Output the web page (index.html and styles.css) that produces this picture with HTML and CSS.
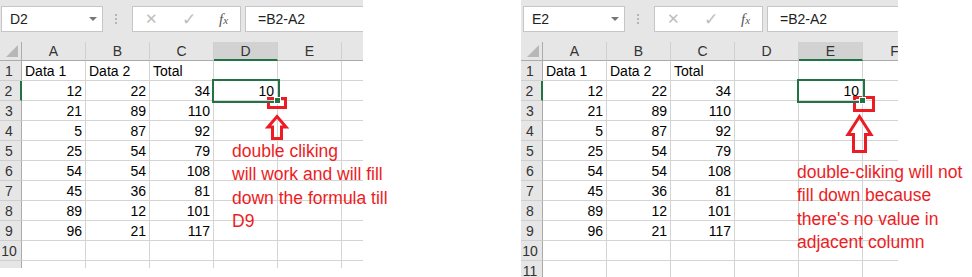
FILE: index.html
```html
<!DOCTYPE html>
<html lang="en">
<head>
    <meta charset="UTF-8">
    <meta name="viewport" content="width=device-width, initial-scale=1.0">
    <title>Fill handle double click</title>
    <link rel="stylesheet" href="styles.css">
</head>
<body>
    <div class="stage">
        <div class="sheet sheet-left">
            <div class="toolbar">
                <div class="namebox"><span>D2</span><span class="caret"></span></div>
                <div class="grip"><i></i><i></i><i></i></div>
                <div class="fbuttons">
                    <span class="fbtn">&#x2715;</span>
                    <span class="fbtn check">&#x2713;</span>
                    <span class="fx">f<small>x</small></span>
                </div>
                <div class="formula">=B2-A2</div>
            </div>
            <div class="grid" data-active-col="3" data-cols="ABCDE " data-labels="10"></div>
        </div>

        <div class="sheet sheet-right">
            <div class="toolbar">
                <div class="namebox"><span>E2</span><span class="caret"></span></div>
                <div class="grip"><i></i><i></i><i></i></div>
                <div class="fbuttons">
                    <span class="fbtn">&#x2715;</span>
                    <span class="fbtn check">&#x2713;</span>
                    <span class="fx">f<small>x</small></span>
                </div>
                <div class="formula">=B2-A2</div>
            </div>
            <div class="grid" data-active-col="4" data-cols="ABCDEF" data-labels="11"></div>
        </div>

        <!-- paint annotations -->
        <svg class="marks" width="972" height="277" viewBox="0 0 972 277">
            <rect x="268.5" y="98.5" width="17" height="9" />
            <polygon points="277,116.5 286,127 281.5,127 281.5,138.5 272.5,138.5 272.5,127 268,127" />
            <rect x="854.5" y="97.5" width="19" height="13" />
            <polygon points="859.5,116.5 871,134.5 865.5,134.5 865.5,151.5 853.5,151.5 853.5,134.5 848,134.5" />
        </svg>
        <div class="note note-left">double cliking<br>will work and will fill<br>down the formula till<br>D9</div>
        <div class="note note-right">double-cliking will not<br>fill down because<br>there's no value in<br>adjacent column</div>
    </div>

    <script>
        const data = [
            ['Data 1', 'Data 2', 'Total'],
            [12, 22, 34],
            [21, 89, 110],
            [5, 87, 92],
            [25, 54, 79],
            [54, 54, 108],
            [45, 36, 81],
            [89, 12, 101],
            [96, 21, 117]
        ];

        function cell(cls, text) {
            const div = document.createElement('div');
            div.className = cls;
            if (text !== undefined) div.textContent = text;
            return div;
        }

        document.querySelectorAll('.grid').forEach(grid => {
            const activeCol = Number(grid.dataset.activeCol);
            const letters = grid.dataset.cols.split('');
            const labels = Number(grid.dataset.labels);

            grid.appendChild(cell('corner'));
            letters.forEach((l, i) => {
                grid.appendChild(cell(i === activeCol ? 'colhead sel' : 'colhead', l.trim()));
            });

            for (let r = 1; r <= 11; r++) {
                grid.appendChild(cell(r === 2 ? 'rowhead sel' : 'rowhead', r <= labels ? r : ''));
                const values = data[r - 1] || [];
                letters.forEach((l, c) => {
                    const v = values[c];
                    let cls = typeof v === 'number' ? 'cell num' : 'cell';
                    let text = v;
                    if (r === 2 && c === activeCol) {
                        cls = 'cell num active';
                        text = 10;
                    }
                    grid.appendChild(cell(cls, text));
                });
            }
        });
    </script>
</body>
</html>
```
FILE: styles.css
```css
body {
    margin: 0;
    background: #fff;
    font-family: "Liberation Sans", Arial, sans-serif;
    overflow: hidden;
}
.stage {
    position: relative;
    display: flex;
    align-items: flex-start;
    gap: 158px;
    width: 972px;
    height: 277px;
}
.sheet {
    background: #e6e6e6;
    overflow: hidden;
}
.sheet-left {
    width: 363px;
    height: 268px;
}
.sheet-right {
    width: 377px;
    height: 277px;
}

/* formula bar */
.toolbar {
    display: flex;
    align-items: flex-start;
    height: 42px;
    padding: 6px 0 0 1px;
    box-sizing: border-box;
}
.sheet-right .toolbar {
    padding-left: 2px;
}
.namebox {
    display: flex;
    align-items: center;
    justify-content: space-between;
    width: 102px;
    height: 26px;
    box-sizing: border-box;
    padding: 0 5px 0 8px;
    background: #fff;
    border: 1px solid #c6c6c6;
    font-size: 14px;
    color: #222;
}
.caret {
    width: 0;
    height: 0;
    border-left: 4px solid transparent;
    border-right: 4px solid transparent;
    border-top: 4px solid #777;
}
.grip {
    display: flex;
    flex-direction: column;
    gap: 2px;
    width: 3px;
    margin: 8px 14px 0 12px;
}
.grip i {
    display: block;
    width: 2px;
    height: 2px;
    background: #b5b5b5;
}
.fbuttons {
    display: flex;
    align-items: center;
    width: 109px;
    height: 26px;
    box-sizing: border-box;
    background: #fff;
    border: 1px solid #c6c6c6;
    padding-left: 12px;
}
.fbtn {
    width: 37px;
    color: #bdbdbd;
    font-size: 15px;
}
.fbtn.check {
    font-size: 17px;
}
.fx {
    font-family: "Liberation Serif", serif;
    font-style: italic;
    font-size: 15px;
    color: #555;
}
.fx small {
    font-size: 11px;
}
.formula {
    flex: 1;
    height: 26px;
    margin-left: 4px;
    box-sizing: border-box;
    padding: 4px 0 0 12px;
    background: #fff;
    border: 1px solid #c6c6c6;
    border-right: none;
    font-size: 14px;
    color: #222;
}

/* sheet grid */
.grid {
    display: grid;
    grid-template-columns: 22px repeat(6, 64px);
    grid-template-rows: 19px repeat(11, 20px);
    font-size: 14px;
    color: #000;
    background: #fff;
}
.corner, .colhead, .rowhead {
    background: #e6e6e6;
    color: #333;
    box-sizing: border-box;
}
.corner {
    position: relative;
    border-right: 1px solid #ababab;
    border-bottom: 1px solid #ababab;
}
.corner::after {
    content: "";
    position: absolute;
    right: 3px;
    bottom: 3px;
    border-left: 12px solid transparent;
    border-bottom: 12px solid #b7b7b7;
}
.colhead {
    display: flex;
    align-items: center;
    justify-content: center;
    border-right: 1px solid #cfcfcf;
    border-bottom: 1px solid #ababab;
}
.colhead.sel {
    background: #d2d2d2;
    border-bottom: 2px solid #217346;
}
.rowhead {
    display: flex;
    align-items: center;
    justify-content: center;
    padding-right: 3px;
    border-right: 1px solid #ababab;
    border-bottom: 1px solid #cfcfcf;
}
.rowhead.sel {
    border-right: 2px solid #217346;
}
.cell {
    display: flex;
    align-items: center;
    padding: 0 3px;
    box-sizing: border-box;
    border-right: 1px solid #d4d4d4;
    border-bottom: 1px solid #d4d4d4;
    white-space: nowrap;
}
.cell.num {
    justify-content: flex-end;
}
.cell.active {
    position: relative;
    z-index: 1;
    outline: 2px solid #217346;
}
.cell.active::after {
    content: "";
    position: absolute;
    right: -4px;
    bottom: -4px;
    width: 5px;
    height: 5px;
    background: #217346;
    border: 1px solid #fff;
}

/* red paint annotations */
.marks {
    position: absolute;
    left: 0;
    top: 0;
    pointer-events: none;
}
.marks rect, .marks polygon {
    fill: none;
    stroke: #ed1c24;
    stroke-width: 3;
}
.note {
    position: absolute;
    color: #ed1c24;
    font-size: 17.5px;
    line-height: 23.3px;
    white-space: nowrap;
}
.note-left {
    left: 232px;
    top: 140px;
}
.note-right {
    left: 797px;
    top: 161px;
}
```
